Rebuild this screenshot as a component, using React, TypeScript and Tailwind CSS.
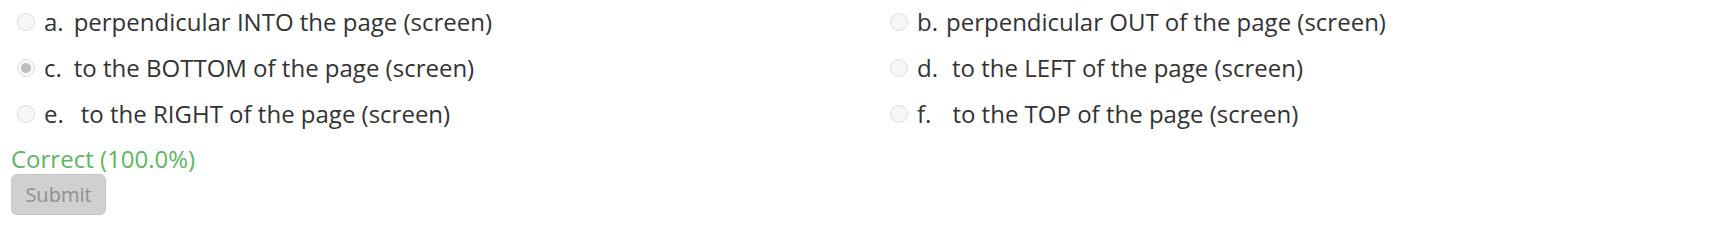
import React from "react";

type Option = { letter: string; text: string; gap: string; checked?: boolean };

const left: Option[] = [
  { letter: "a.", text: "perpendicular INTO the page (screen)", gap: "ml-[10px]" },
  { letter: "c.", text: "to the BOTTOM of the page (screen)", gap: "ml-[12px]", checked: true },
  { letter: "e.", text: "to the RIGHT of the page (screen)", gap: "ml-[17px]" },
];

const right: Option[] = [
  { letter: "b.", text: "perpendicular OUT of the page (screen)", gap: "ml-[8px]" },
  { letter: "d.", text: "to the LEFT of the page (screen)", gap: "ml-[14px]" },
  { letter: "f.", text: "to the TOP of the page (screen)", gap: "ml-[21px]" },
];

function Radio({ checked }: { checked?: boolean }) {
  return (
    <span className="inline-flex h-[18px] w-[18px] shrink-0 items-center justify-center rounded-full border-[1.5px] border-[#dcdcdc] bg-[#f7f7f7]">
      {checked && <span className="h-[10px] w-[10px] rounded-full bg-[#bdbdbd]" />}
    </span>
  );
}

function Choice({ o }: { o: Option }) {
  return (
    <label className="flex h-[46px] items-center">
      <Radio checked={o.checked} />
      <span className="ml-[9px]">{o.letter}</span>
      <span className={o.gap}>{o.text}</span>
    </label>
  );
}

export default function App() {
  return (
    <div className="min-h-screen bg-white px-[11px] font-['Open_Sans',sans-serif] text-[24px] text-[#333]">
      <div className="-mt-[1px] grid grid-cols-[873px_1fr]">
        <div className="pl-[6px]">
          {left.map((o) => (
            <Choice key={o.letter} o={o} />
          ))}
        </div>
        <div className="pl-[6px]">
          {right.map((o) => (
            <Choice key={o.letter} o={o} />
          ))}
        </div>
      </div>
      <div className="mt-[6px] leading-[32px] text-[#5cb85c]">Correct (100.0%)</div>
      <button
        disabled
        className="mt-[-1px] flex h-[41px] w-[95px] items-center justify-center rounded-[6px] border border-[#c6c6c6] bg-[#d0d0d0] text-[20px] text-[#8f8f8f]"
      >
        Submit
      </button>
    </div>
  );
}
